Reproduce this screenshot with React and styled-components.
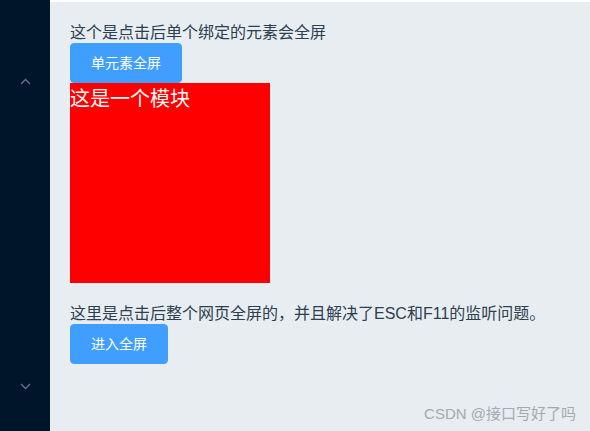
import React from "react";
import styled, { createGlobalStyle } from "styled-components";

const GlobalStyle = createGlobalStyle`
  html, body {
    margin: 0;
    padding: 0;
    height: 100%;
  }
  body {
    font-family: "Liberation Sans", "Noto Sans CJK SC", sans-serif;
    color: #2c3e50;
  }
  #root {
    height: 100%;
  }
`;

const Layout = styled.div`
  display: flex;
  width: 590px;
  height: 431px;
  position: relative;
  overflow: hidden;
`;

const Sidebar = styled.aside`
  width: 50px;
  flex-shrink: 0;
  background: #001529;
  display: flex;
  flex-direction: column;
  align-items: center;
  justify-content: space-between;
  padding: 78px 0 41px;
  box-sizing: border-box;
`;

const Chevron = styled.svg`
  width: 11px;
  height: 7px;
  display: block;
`;

const Main = styled.main`
  flex: 1;
  background: #e8edf1;
  border-top: 2px solid #ffffff;
  padding: 21px 20px 0;
  box-sizing: border-box;
`;

const Caption = styled.p`
  margin: ${(p) => (p.$spaced ? "21px" : "0")} 0 0;
  font-size: 16px;
  line-height: 20px;
  color: #2c3e50;
`;

const Button = styled.button`
  display: block;
  background: #409eff;
  border: 1px solid #409eff;
  color: #fff;
  font-family: "Liberation Sans", "Noto Sans CJK SC", sans-serif;
  font-size: 14px;
  line-height: 1;
  padding: 12px 20px;
  border-radius: 4px;
  cursor: pointer;
`;

const Block = styled.div`
  width: 200px;
  height: 200px;
  background: #ff0000;
  color: #fff;
  font-size: 20px;
`;

const Watermark = styled.span`
  position: absolute;
  right: 14px;
  bottom: 8px;
  font-size: 15px;
  color: #a3a9b0;
  font-family: "Liberation Sans", "Noto Sans CJK SC", sans-serif;
`;

const ChevronIcon = ({ up }) => (
  <Chevron viewBox="0 0 11 7">
    <path
      d={up ? "M1 6 L5.5 1.5 L10 6" : "M1 1 L5.5 5.5 L10 1"}
      fill="none"
      stroke="#5a7796"
      strokeWidth="1.3"
    />
  </Chevron>
);

export default function App() {
  return (
    <>
      <GlobalStyle />
      <Layout>
        <Sidebar>
          <ChevronIcon up />
          <ChevronIcon />
        </Sidebar>
        <Main>
          <Caption>这个是点击后单个绑定的元素会全屏</Caption>
          <Button>单元素全屏</Button>
          <Block>这是一个模块</Block>
          <Caption $spaced>
            这里是点击后整个网页全屏的，并且解决了ESC和F11的监听问题。
          </Caption>
          <Button>进入全屏</Button>
        </Main>
        <Watermark>CSDN @接口写好了吗</Watermark>
      </Layout>
    </>
  );
}
